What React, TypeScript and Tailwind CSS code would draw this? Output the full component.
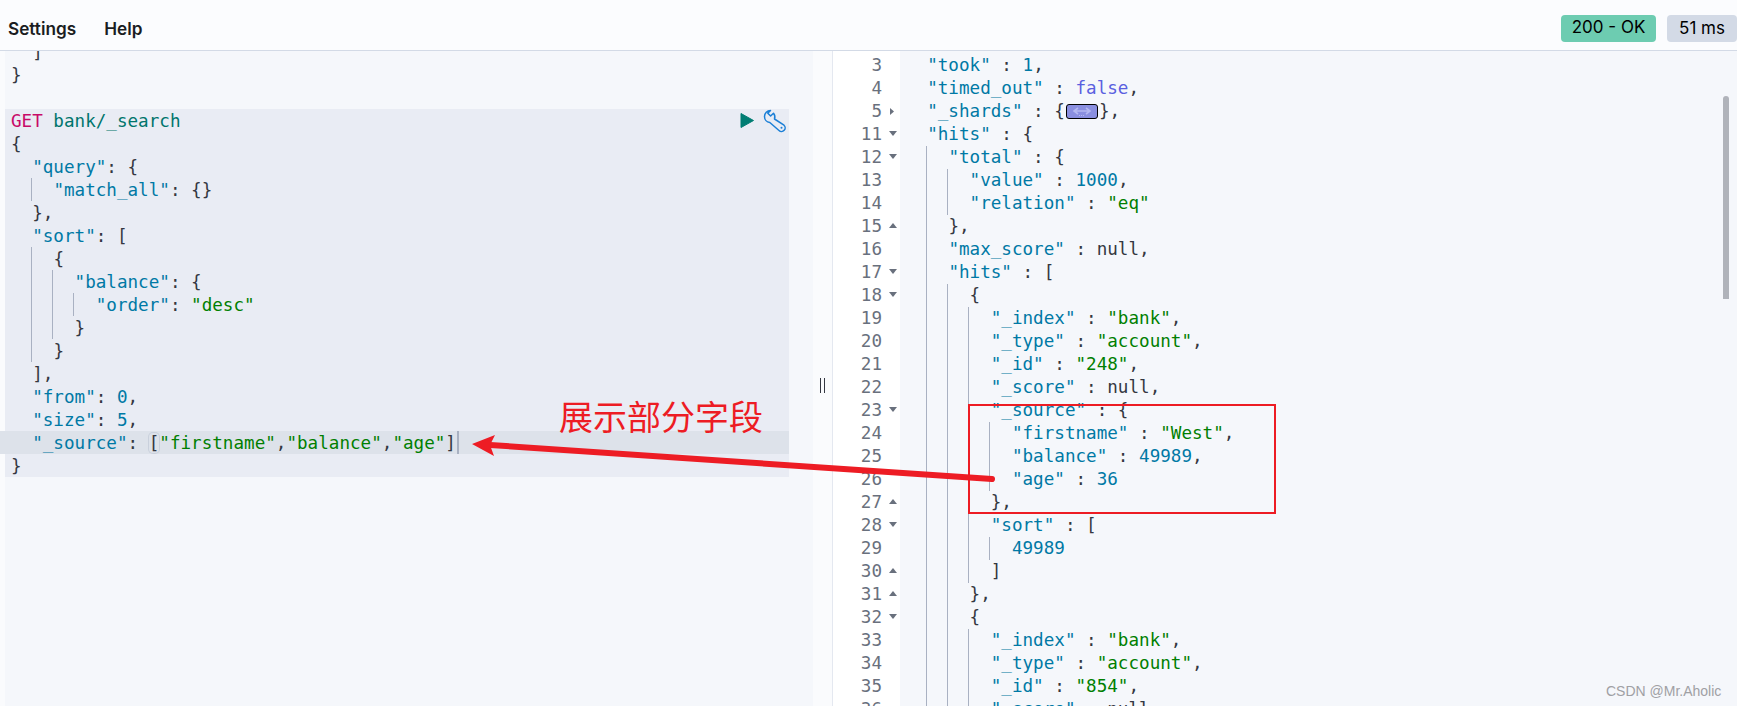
const mono = "font-['DejaVu_Sans_Mono','Liberation_Mono',monospace] text-[17.6px]"

const leftRows = [
  '  ]',
  '}',
  '',
]

const blockRows = [
  '{',
  '  "query": {',
  '    "match_all": {}',
  '  },',
  '  "sort": [',
  '    {',
  '      "balance": {',
  '        "order": "desc"',
  '      }',
  '    }',
  '  ],',
  '  "from": 0,',
  '  "size": 5,',
]

type Fold = 'down' | 'up' | 'right' | null

const rightRows: [string, string, Fold][] = [
  ['2', '{', null],
  ['3', '  "took" : 1,', null],
  ['4', '  "timed_out" : false,', null],
  ['5', '  "_shards" : {', 'right'],
  ['11', '  "hits" : {', 'down'],
  ['12', '    "total" : {', 'down'],
  ['13', '      "value" : 1000,', null],
  ['14', '      "relation" : "eq"', null],
  ['15', '    },', 'up'],
  ['16', '    "max_score" : null,', null],
  ['17', '    "hits" : [', 'down'],
  ['18', '      {', 'down'],
  ['19', '        "_index" : "bank",', null],
  ['20', '        "_type" : "account",', null],
  ['21', '        "_id" : "248",', null],
  ['22', '        "_score" : null,', null],
  ['23', '        "_source" : {', 'down'],
  ['24', '          "firstname" : "West",', null],
  ['25', '          "balance" : 49989,', null],
  ['26', '          "age" : 36', null],
  ['27', '        },', 'up'],
  ['28', '        "sort" : [', 'down'],
  ['29', '          49989', null],
  ['30', '        ]', 'up'],
  ['31', '      },', 'up'],
  ['32', '      {', 'down'],
  ['33', '        "_index" : "bank",', null],
  ['34', '        "_type" : "account",', null],
  ['35', '        "_id" : "854",', null],
  ['36', '        "_score" : null,', null],
]

// splits a json line into coloured pieces
function Tokens({ text }: { text: string }) {
  const parts = text.match(/"[^"]*"(?=\s*:)|"[^"]*"|\b\d+\b|\bfalse\b|\bnull\b|[^"\d]+?(?=\b|"|$)|./g) ?? []
  return (
    <>
      {parts.map((p, i) => {
        let color = 'text-[#343741]'
        if (p.startsWith('"')) {
          const rest = text.slice(parts.slice(0, i + 1).join('').length)
          color = /^\s*:/.test(rest) ? 'text-[#0079a5]' : 'text-[#017f01]'
        } else if (/^\d+$/.test(p)) {
          color = 'text-[#0079a5]'
        } else if (p === 'false') {
          color = 'text-[#5a5fe0]'
        }
        return (
          <span key={i} className={color}>
            {p}
          </span>
        )
      })}
    </>
  )
}

function Guides({ line }: { line: string }) {
  const level = Math.floor((line.length - line.trimStart().length) / 2)
  return (
    <>
      {Array.from({ length: level }).map((_, i) => (
        <span
          key={i}
          className={`h-[23px] w-[21.2px] shrink-0 ${i > 0 ? 'border-l border-[#a9b1c2]' : ''}`}
        />
      ))}
    </>
  )
}

function CodeLine({ line, children }: { line: string; children?: React.ReactNode }) {
  return (
    <div className="flex h-[23px] whitespace-pre">
      <Guides line={line} />
      <span className="pl-[1.5px]">
        <Tokens text={line.trimStart()} />
        {children}
      </span>
    </div>
  )
}

function FoldMark({ dir }: { dir: Fold }) {
  if (!dir) return null
  const points = dir === 'down' ? '0,0 8,0 4,5' : dir === 'up' ? '0,5 8,5 4,0' : '1,0 5,3.5 1,7'
  return (
    <svg width="8" height="7" viewBox="0 0 8 7" className="mt-[8px] ml-[7px]">
      <polygon points={points} fill="#69707d" />
    </svg>
  )
}

export default function App() {
  return (
    <div className="relative flex h-screen w-full flex-col overflow-hidden bg-[#f5f7fb]">
      <header className="relative z-10 flex h-[51px] shrink-0 items-center justify-between border-b border-[#d3dae6] bg-[#fbfcfe] pt-[6px] pl-2 font-['Inter',sans-serif] text-[#1a1c21]">
        <div className="mt-[2px] flex gap-7 text-[17.2px] font-semibold">
          <span>Settings</span>
          <span>Help</span>
        </div>
        <div className="flex items-center gap-[11px] text-[17px] text-black">
          <span className="flex h-[27px] w-[95px] items-center justify-center rounded bg-[#6dccb1]">200 - OK</span>
          <span className="mt-px flex h-[27px] w-[70px] items-center justify-center rounded bg-[#d3dae6]">51 ms</span>
        </div>
      </header>

      <main className="flex min-h-0 flex-1">
        {/* request editor */}
        <section className="w-[813px] shrink-0 overflow-hidden bg-[#fafbfd]">
          <div className={`-mt-[11px] ml-[5px] h-[calc(100%+11px)] bg-[#f5f7fb] pr-[24px] leading-[25px] ${mono}`}>
            <div className="pl-[4.5px]">
              {leftRows.map((line, i) => (
                <CodeLine key={i} line={line} />
              ))}
            </div>
            <div className="relative bg-[#e9ecf4] pl-[4.5px]">
              <div className="flex h-[23px] whitespace-pre pl-[1.5px]">
                <span className="text-[#c80a68]">GET</span>
                <span className="text-[#00756c]"> bank/_search</span>
              </div>
              {blockRows.map((line, i) => (
                <CodeLine key={i} line={line} />
              ))}
              <div className="-ml-[9.5px] flex h-[23px] bg-[#dde2ea] pl-[9.5px] whitespace-pre">
                <Guides line="  x" />
                <span className="pl-[1.5px]">
                  <span className="text-[#0079a5]">"_source"</span>
                  <span className="text-[#343741]">: </span>
                  <span className="rounded-sm text-[#343741] ring-1 ring-[#c9d0dc]">[</span>
                  <span className="text-[#017f01]">"firstname"</span>
                  <span className="text-[#343741]">,</span>
                  <span className="text-[#017f01]">"balance"</span>
                  <span className="text-[#343741]">,</span>
                  <span className="text-[#017f01]">"age"</span>
                  <span className="text-[#343741]">]</span>
                  <span className="ml-px inline-block h-[23px] w-[2px] bg-[#a9b1c2] align-top" />
                </span>
              </div>
              <CodeLine line="}" />
              <div className="absolute top-0 right-[3px] flex items-start gap-[9px]">
                <svg width="14" height="17" viewBox="0 0 14 17" className="mt-[3px]">
                  <path d="M1 1.5 L13.5 8.5 L1 15.5 Z" fill="#017d73" stroke="#017d73" strokeLinejoin="round" />
                </svg>
                <svg width="23" height="24" viewBox="0 0 23 24" fill="none" stroke="#1b7fd6" strokeWidth="1.5" strokeLinejoin="round">
                  <path d="M7.5 1.5 L4.8 4.2 L7.6 7 L10.5 4.2 A6 6 0 0 1 11.5 10 L21 16.2 A3.6 3.6 0 0 1 16 21.5 L6.8 13.5 A6 6 0 0 1 1.5 7.5 A6 6 0 0 1 7.5 1.5 Z" />
                  <circle cx="18.5" cy="18.7" r="1" fill="#1b7fd6" stroke="none" />
                </svg>
              </div>
            </div>
          </div>
        </section>

        {/* resize handle */}
        <div className="flex w-[20px] shrink-0 items-center justify-center gap-[3px] border-r border-[#e4e8f0] bg-[#fafbfd] pt-[14px]">
          <span className="h-[15px] w-px bg-[#343741]" />
          <span className="h-[15px] w-px bg-[#343741]" />
        </div>

        {/* response */}
        <section className="min-w-0 flex-1 overflow-hidden">
          <div className={`-mt-[20px] leading-[23px] ${mono}`}>
            {rightRows.map(([num, line, fold]) => (
              <div key={num} className="flex h-[23px]">
                <div className="flex w-[67px] shrink-0 bg-white text-[#69707d]">
                  <span className="w-[49px] text-right">{num}</span>
                  <FoldMark dir={fold} />
                </div>
                <div className="pl-[4.5px]">
                  <CodeLine line={line}>
                    {num === '5' && (
                      <>
                        <svg width="32" height="15" viewBox="0 0 32 15" className="mx-px inline-block align-[-2px]">
                          <rect x="0.5" y="0.5" width="31" height="14" rx="2.5" fill="#8a8fe0" stroke="#000" />
                          <path d="M9 7 H23 M12 4 L8 7 L12 10 M20 4 L24 7 L20 10" fill="none" stroke="#b4b8f0" strokeWidth="1.6" />
                          <path d="M13 11.5 H19" stroke="#b4b8f0" strokeDasharray="1 1" />
                        </svg>
                        <span className="text-[#343741]">{'},'}</span>
                      </>
                    )}
                  </CodeLine>
                </div>
              </div>
            ))}
          </div>
        </section>
      </main>

      {/* scrollbar thumb */}
      <div className="absolute top-[96px] left-[1723px] h-[203px] w-[6px] rounded-t-[3px] bg-[#b0b3ba]" />

      {/* annotations on top of the screenshot */}
      <div className="absolute top-[396px] left-[559px] font-['Noto_Sans_CJK_SC',sans-serif] text-[34px] leading-[40px] whitespace-nowrap text-[#ed1c24]">
        展示部分字段
      </div>
      <div className="absolute top-[404px] left-[968px] h-[110px] w-[308px] border-2 border-[#ed1c24]" />
      <svg className="pointer-events-none absolute inset-0" width="1737" height="706">
        <line x1="992" y1="479" x2="490" y2="445" stroke="#ed1c24" strokeWidth="6" strokeLinecap="round" />
        <polygon points="472,444 495,435 490,445 494,456" fill="#ed1c24" />
      </svg>

      <div className="absolute top-[683px] left-[1606px] font-['Liberation_Sans',sans-serif] text-[14px] leading-[16px] text-[#a0a0a4]">
        CSDN @Mr.Aholic
      </div>
    </div>
  )
}
